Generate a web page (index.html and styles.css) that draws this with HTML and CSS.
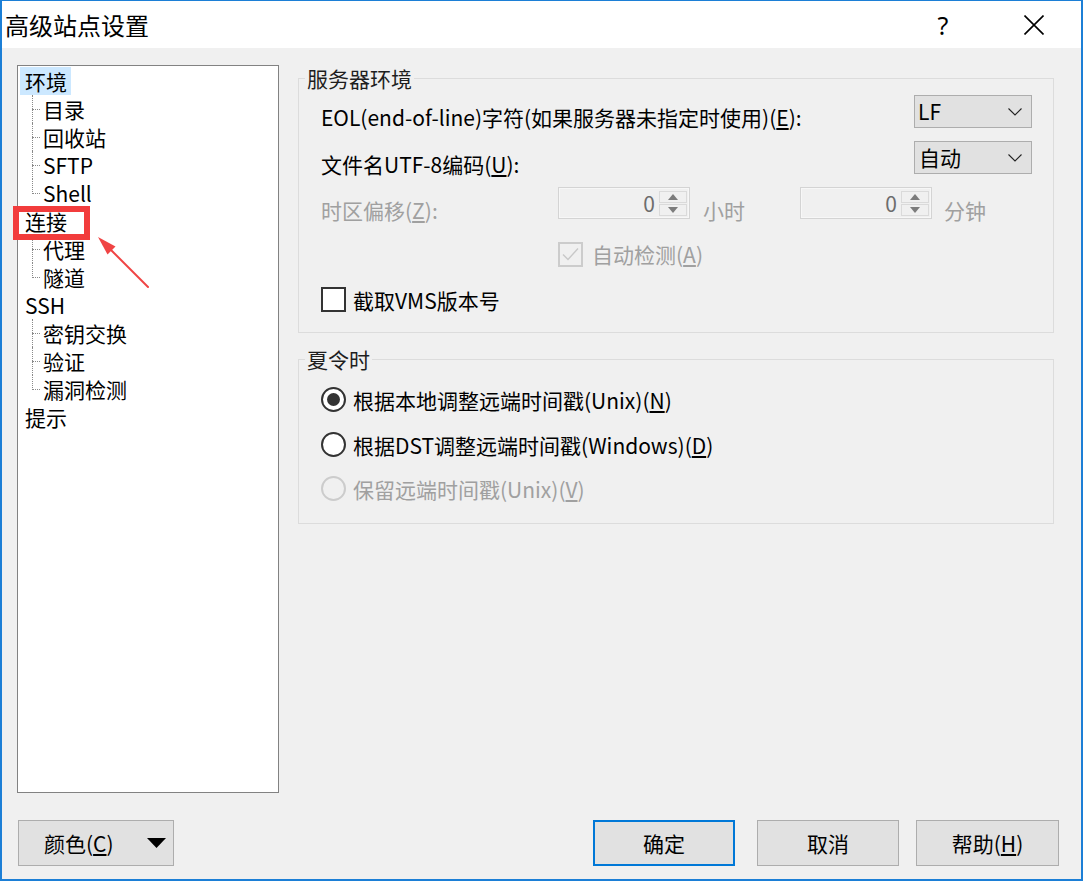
FILE: index.html
```html
<!DOCTYPE html>
<html lang="zh-CN">
<head>
<meta charset="utf-8">
<title>高级站点设置</title>
<link rel="stylesheet" href="styles.css">
</head>
<body>
<div class="window">
  <div class="titlebar">
    <div class="title">高级站点设置</div>
    <div class="tb-btn help">?</div>
    <div class="tb-btn close">
      <svg width="20" height="20" viewBox="0 0 20 20"><path d="M0.5 0.5 L19.5 19.5 M19.5 0.5 L0.5 19.5" stroke="#000" stroke-width="1.6" fill="none"/></svg>
    </div>
  </div>

  <div class="main">
    <div class="top">
      <div class="tree-wrap">
        <div class="tree">
          <div class="node"><span class="lbl sel">环境</span></div>
          <div class="kids">
            <div class="kid">目录</div>
            <div class="kid">回收站</div>
            <div class="kid">SFTP</div>
            <div class="kid">Shell</div>
          </div>
          <div class="node"><span class="lbl">连接</span></div>
          <div class="kids">
            <div class="kid">代理</div>
            <div class="kid">隧道</div>
          </div>
          <div class="node"><span class="lbl">SSH</span></div>
          <div class="kids">
            <div class="kid">密钥交换</div>
            <div class="kid">验证</div>
            <div class="kid">漏洞检测</div>
          </div>
          <div class="node"><span class="lbl">提示</span></div>
        </div>
        <div class="mark"></div>
        <svg class="arrow" width="262" height="300" viewBox="0 0 262 300">
          <path d="M131 222 L93 184" stroke="#f04444" stroke-width="2" fill="none" stroke-linecap="round"/>
          <path d="M81 172 L98.5 181.5 L90.5 189.5 Z" fill="#f04444"/>
        </svg>
      </div>

      <div class="panel">
        <fieldset class="group g1">
          <legend>服务器环境</legend>
          <div class="row r1">
            <span class="lbl-text l1">EOL(end-of-line)字符(如果服务器未指定时使用)(<u>E</u>):</span>
            <div class="combo"><span class="combo-val">LF</span><svg class="chev" width="14" height="8" viewBox="0 0 14 8"><path d="M0.5 0.5 L7 7 L13.5 0.5" stroke="#222" stroke-width="1.1" fill="none"/></svg></div>
          </div>
          <div class="row r2">
            <span class="lbl-text l2">文件名UTF-8编码(<u>U</u>):</span>
            <div class="combo"><span class="combo-val cjk">自动</span><svg class="chev" width="14" height="8" viewBox="0 0 14 8"><path d="M0.5 0.5 L7 7 L13.5 0.5" stroke="#222" stroke-width="1.1" fill="none"/></svg></div>
          </div>
          <div class="row r3">
            <span class="lbl-text l3 dis tz">时区偏移(<u>Z</u>):</span>
            <div class="spin">
              <span class="spin-val">0</span>
              <div class="spin-btns">
                <div class="sbtn"><svg width="10" height="6" viewBox="0 0 10 6"><path d="M0 6 L5 0 L10 6 Z" fill="#7c7c7c"/></svg></div>
                <div class="sbtn"><svg width="10" height="6" viewBox="0 0 10 6"><path d="M0 0 L10 0 L5 6 Z" fill="#7c7c7c"/></svg></div>
              </div>
            </div>
            <span class="lbl-text l3 dis unit1">小时</span>
            <div class="spin">
              <span class="spin-val">0</span>
              <div class="spin-btns">
                <div class="sbtn"><svg width="10" height="6" viewBox="0 0 10 6"><path d="M0 6 L5 0 L10 6 Z" fill="#7c7c7c"/></svg></div>
                <div class="sbtn"><svg width="10" height="6" viewBox="0 0 10 6"><path d="M0 0 L10 0 L5 6 Z" fill="#7c7c7c"/></svg></div>
              </div>
            </div>
            <span class="lbl-text l3 dis unit2">分钟</span>
          </div>
          <div class="row r4">
            <div class="chk chk-dis"><svg width="21" height="21" viewBox="0 0 21 21"><path d="M3 10.5 L8 15.5 L18 4.5" stroke="#c8c8c8" stroke-width="1.4" fill="none"/></svg></div>
            <span class="lbl-text dis chk-lbl-dis">自动检测(<u>A</u>)</span>
          </div>
          <div class="row r5">
            <div class="chk"></div>
            <span class="lbl-text chk-lbl">截取VMS版本号</span>
          </div>
        </fieldset>

        <fieldset class="group g2">
          <legend>夏令时</legend>
          <div class="row rad first">
            <div class="radio on"><span class="dot"></span></div>
            <span class="lbl-text rad-lbl">根据本地调整远端时间戳(Unix)(<u>N</u>)</span>
          </div>
          <div class="row rad">
            <div class="radio"></div>
            <span class="lbl-text rad-lbl">根据DST调整远端时间戳(Windows)(<u>D</u>)</span>
          </div>
          <div class="row rad last">
            <div class="radio radio-dis"></div>
            <span class="lbl-text rad-lbl dis">保留远端时间戳(Unix)(<u>V</u>)</span>
          </div>
        </fieldset>
      </div>
    </div>

    <div class="footer">
      <div class="btn color-btn"><span>颜色(<u>C</u>)</span><svg class="tri" width="19" height="10" viewBox="0 0 19 10"><path d="M0 0 L19 0 L9.5 10 Z" fill="#000"/></svg></div>
      <div class="btn ok">确定</div>
      <div class="btn cancel">取消</div>
      <div class="btn helpbtn">帮助(<u>H</u>)</div>
    </div>
  </div>
</div>
</body>
</html>
```

FILE: styles.css
```css
* { box-sizing: border-box; }

html, body {
  margin: 0;
  padding: 0;
  background: #f0f0f0;
}

body {
  font-family: "Noto Sans CJK SC", "Noto Sans", sans-serif;
  font-size: 21px;
  color: #000;
}

.window {
  width: 1083px;
  height: 881px;
  border-top: 1px solid #1c7fd6;
  border-left: 2px solid #1c7fd6;
  border-right: 2px solid #1c7fd6;
  border-bottom: 2px solid #1c7fd6;
  background: #f0f0f0;
  display: flex;
  flex-direction: column;
}

/* title bar */
.titlebar {
  height: 47px;
  background: #fff;
  display: flex;
  align-items: center;
  padding-left: 3px;
  padding-right: 24px;
}
.title {
  flex: 1;
  font-size: 24px;
  line-height: 47px;
  color: #000;
}
.tb-btn {
  width: 46px;
  height: 47px;
  display: flex;
  align-items: center;
  justify-content: center;
}
.help {
  font-family: "Noto Sans", sans-serif;
  font-size: 25px;
  margin-right: 45px;
  padding-top: 1px;
}
.close svg { display: block; }

/* main area */
.main {
  flex: 1;
  display: flex;
  flex-direction: column;
  padding: 17px 27px 0 15px;
}
.top {
  display: flex;
  height: 728px;
}

/* tree */
.tree-wrap {
  position: relative;
  width: 262px;
  height: 728px;
}
.tree {
  width: 100%;
  height: 100%;
  background: #fff;
  border: 1px solid #828282;
  padding-top: 1px;
}
.node {
  height: 28px;
  line-height: 28px;
  padding-left: 2px;
}
.lbl {
  display: inline-block;
  height: 28px;
  padding: 0 4px 0 5px;
}
.lbl.sel { background: #cce8ff; }

.kid {
  position: relative;
  height: 28px;
  line-height: 28px;
  padding-left: 25px;
}
.kid::before {
  content: "";
  position: absolute;
  left: 14px;
  top: 14px;
  width: 8px;
  border-top: 1px dotted #8a8a8a;
}
.kid::after {
  content: "";
  position: absolute;
  left: 14px;
  top: 0;
  height: 28px;
  border-left: 1px dotted #8a8a8a;
}
.kid:last-child::after { height: 15px; }

.mark {
  position: absolute;
  left: -4px;
  top: 141px;
  width: 77px;
  height: 34px;
  border: 6px solid #f23c3c;
}
.arrow {
  position: absolute;
  left: 0;
  top: 0;
  overflow: visible;
}

/* right panel */
.panel {
  margin-left: 19px;
  width: 756px;
}
.group {
  margin: 0;
  border: 1px solid #dcdcdc;
  padding: 0 21px 20px 22px;
  min-width: 0;
}
.group legend {
  font-size: 21px;
  line-height: 26px;
  padding: 0 2px;
  margin-left: -16px;
  color: #1e1e1e;
}
.g2 {
  margin-top: 13px;
  padding-bottom: 22px;
}

.row {
  display: flex;
  align-items: flex-start;
}
.lbl-text {
  line-height: 26px;
  white-space: nowrap;
}
.dis { color: #a0a0a0; }

.r1 { margin-top: 4px; height: 33px; justify-content: space-between; }
.r2 { margin-top: 13px; height: 33px; justify-content: space-between; }
.l1 { padding-top: 9px; }
.l2 { padding-top: 10px; }

.combo {
  width: 118px;
  height: 33px;
  background: #e1e1e1;
  border: 1px solid #adadad;
  display: flex;
  align-items: center;
  padding-left: 3px;
}
.combo-val { flex: 1; line-height: 31px; }
.combo-val.cjk { padding-left: 1px; }
.chev { margin-right: 9px; margin-top: 1px; }

.r3 { margin-top: 13px; height: 32px; }
.l3 { padding-top: 10px; }
.tz { width: 237px; }
.unit1 { margin-left: 13px; width: 97px; }
.unit2 { margin-left: 12px; }

.spin {
  width: 132px;
  height: 32px;
  border: 1px solid #d4d4d4;
  box-shadow: inset 0 0 0 1px #f7f7f7;
  display: flex;
}
.spin-val {
  flex: 1;
  text-align: right;
  padding-right: 4px;
  line-height: 30px;
  color: #6d6d6d;
}
.spin-btns {
  width: 28px;
  margin: 3px 2px 0 0;
  display: flex;
  flex-direction: column;
  gap: 1px;
}
.sbtn {
  height: 12px;
  border: 1px solid #dadada;
  display: flex;
  align-items: center;
  justify-content: center;
}
.sbtn svg { display: block; }

.r4 { margin-top: 23px; height: 25px; padding-left: 237px; }
.r5 { margin-top: 20px; height: 25px; }

.chk {
  width: 25px;
  height: 25px;
  border: 2px solid #333;
  background: #fff;
  flex: none;
}
.chk-dis {
  border-color: #cccccc;
  background: #f0f0f0;
}
.chk-dis svg { display: block; }
.chk-lbl-dis { margin-left: 9px; margin-top: -1px; }
.chk-lbl { margin-left: 7px; margin-top: 0; }

.rad { height: 25px; margin-top: 20px; }
.rad.first { margin-top: 15px; }
.rad.last { margin-top: 19px; }
.radio {
  width: 25px;
  height: 25px;
  border-radius: 50%;
  border: 2px solid #333;
  background: #fff;
  flex: none;
  display: flex;
  align-items: center;
  justify-content: center;
}
.radio .dot {
  width: 13px;
  height: 13px;
  border-radius: 50%;
  background: #333;
}
.radio-dis {
  border-color: #cccccc;
  background: #f0f0f0;
}
.rad-lbl { margin-left: 7px; margin-top: 0; }

/* footer */
.footer {
  margin-top: 27px;
  height: 46px;
  display: flex;
  padding-left: 1px;
  margin-right: -5px;
}
.btn {
  height: 46px;
  background: #e1e1e1;
  border: 1px solid #adadad;
  display: flex;
  align-items: center;
  justify-content: center;
  line-height: 26px;
}
.color-btn {
  width: 156px;
  justify-content: flex-start;
  padding-left: 25px;
}
.color-btn .tri { margin-left: auto; margin-right: 7px; }
.ok {
  margin-left: auto;
  width: 142px;
  border: 2px solid #0078d7;
}
.cancel { width: 142px; margin-left: 22px; }
.helpbtn { width: 143px; margin-left: 17px; }
```
